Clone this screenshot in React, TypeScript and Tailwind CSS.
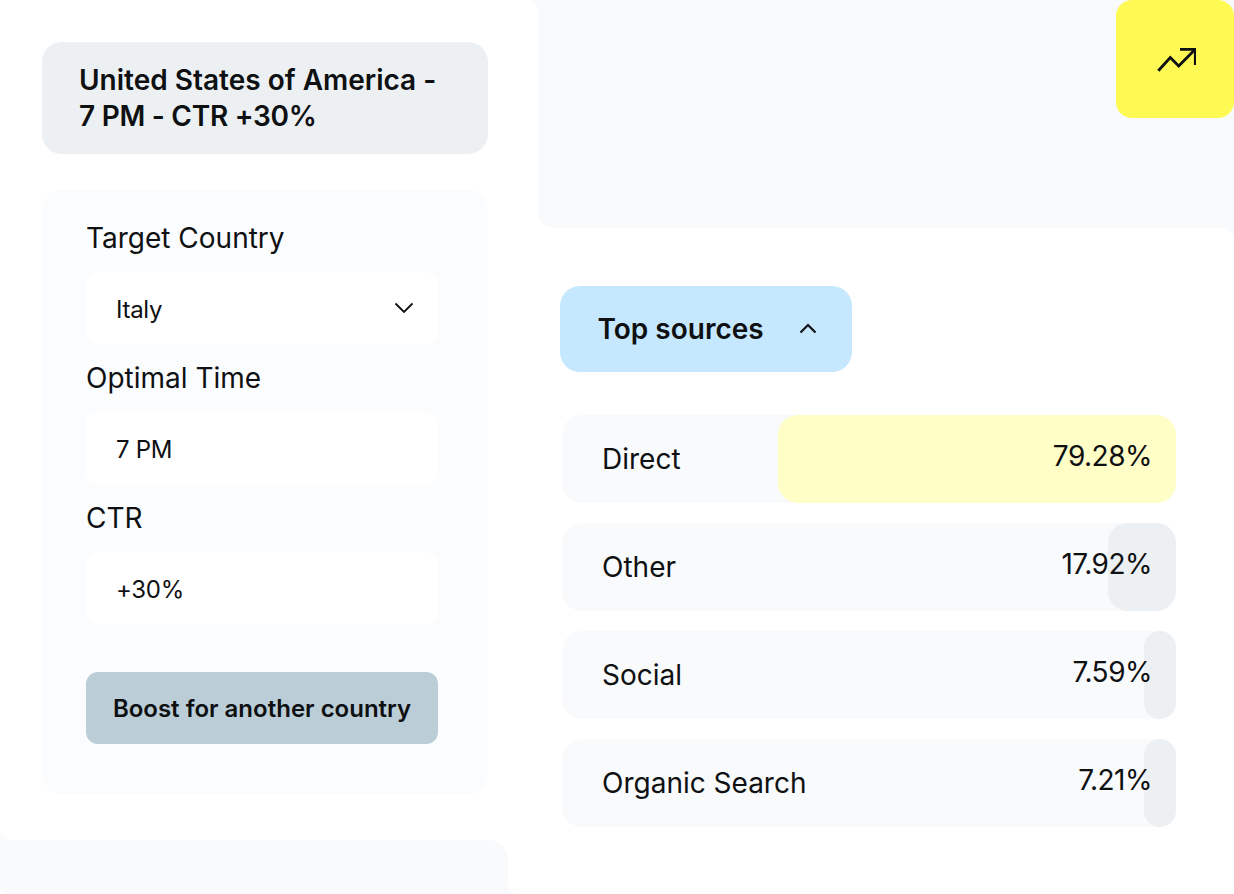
export default function App() {
  const rows = [
    { name: "Direct", value: "79.28%", fill: "w-[398px] bg-[#fffec7]" },
    { name: "Other", value: "17.92%", fill: "w-[68px] bg-[#edf0f3]" },
    { name: "Social", value: "7.59%", fill: "w-[32px] bg-[#edf0f3]" },
    { name: "Organic Search", value: "7.21%", fill: "w-[32px] bg-[#edf0f3]" },
  ];
  const fields = [
    { label: "Target Country", value: "Italy", chevron: true },
    { label: "Optimal Time", value: "7 PM", chevron: false },
    { label: "CTR", value: "+30%", chevron: false },
  ];
  return (
    <div className="flex w-[1234px] h-[894px] overflow-hidden bg-[#f9fafc] rounded-bl-[10px] text-[#0e1012] font-['Inter',sans-serif]">
      <div className="flex flex-col w-[538px] shrink-0">
        <div className="flex flex-col h-[840px] bg-white rounded-tr-[12px] rounded-bl-[10px] pl-[42px] pr-[50px] pt-[42px]">
          <div className="h-[112px] rounded-[20px] bg-[#edf0f3] pl-[37px] pt-[20px] text-[28px] leading-[36px] font-semibold">
            United States of America -<br />
            <span className="tracking-[-0.27px]">7 PM - CTR +30%</span>
          </div>
          <div className="flex flex-col h-[604px] mt-[36px] rounded-[20px] bg-[#fbfcfe] pl-[44px] pr-[50px] pt-[28px]">
            {fields.map((f) => (
              <div key={f.label} className="flex flex-col h-[140px]">
                <div className="text-[28px] leading-[40px] h-[54px] shrink-0">{f.label}</div>
                <div className="flex items-center justify-between h-[72px] shrink-0 rounded-[12px] bg-white pl-[30px] pr-[24px] text-[24px]">
                  <span className="pt-[4px] tracking-[-0.3px]">{f.value}</span>
                  {f.chevron && (
                    <svg width="20" height="12" viewBox="0 0 20 12" fill="none" stroke="#0e1012" strokeWidth="1.8">
                      <path d="M1.5 1.5 L10 10 L18.5 1.5" />
                    </svg>
                  )}
                </div>
                <div className="h-[14px]" />
              </div>
            ))}
            <div className="flex items-center justify-center h-[72px] shrink-0 mt-[34px] pt-[2px] rounded-[12px] bg-[#bbcdd7] text-[24px] font-semibold">
              Boost for another country
            </div>
          </div>
        </div>
        <div className="flex h-[54px] bg-[linear-gradient(#fff_50%,#f9fafc_50%)]">
          <div className="w-[508px] bg-[#f9fafc] rounded-tr-[20px]" />
          <div className="flex-1 bg-white rounded-bl-[10px]" />
        </div>
      </div>
      <div className="flex flex-col flex-1 min-w-0">
        <div className="h-[228px] shrink-0 bg-white">
          <div className="flex justify-end h-[228px] bg-[#f9fafc] rounded-bl-[16px]">
            <div className="flex items-center justify-center w-[118px] h-[118px] bg-[#fffa53] rounded-[16px]">
              <svg width="40" height="40" viewBox="0 0 40 40" fill="none" stroke="#0e1012" strokeWidth="2.8" className="ml-[1px]">
                <path d="M2.3 31.7 L14.3 18.6 L22.7 27 L39 10.6" />
                <path d="M24 10.3 H39.3 V26" />
              </svg>
            </div>
          </div>
        </div>
        <div className="flex flex-col flex-1 bg-white rounded-tr-[12px] pl-[22px] pt-[58px]">
          <div className="flex items-center w-[292px] h-[86px] rounded-[20px] bg-[#c6e8ff] pl-[37.5px] text-[28px] font-semibold">
            <span>Top sources</span>
            <svg width="20" height="12" viewBox="0 0 20 12" fill="none" stroke="#0e1012" strokeWidth="2.2" className="ml-[34px]">
              <path d="M2.5 9.5 L10 2 L17.5 9.5" />
            </svg>
          </div>
          <div className="flex flex-col gap-[20px] w-[614px] ml-[2px] mt-[43px]">
            {rows.map((r) => (
              <div key={r.name} className="relative flex items-center justify-between h-[88px] rounded-[20px] bg-[#f9fafc] pl-[40px] pr-[24px] text-[28px]">
                <div className={`absolute right-0 top-0 h-[88px] rounded-[20px] ${r.fill}`} />
                <span className="relative">{r.name}</span>
                <span className="relative mt-[-6px] tracking-[-0.5px]">{r.value}</span>
              </div>
            ))}
          </div>
        </div>
      </div>
    </div>
  );
}
